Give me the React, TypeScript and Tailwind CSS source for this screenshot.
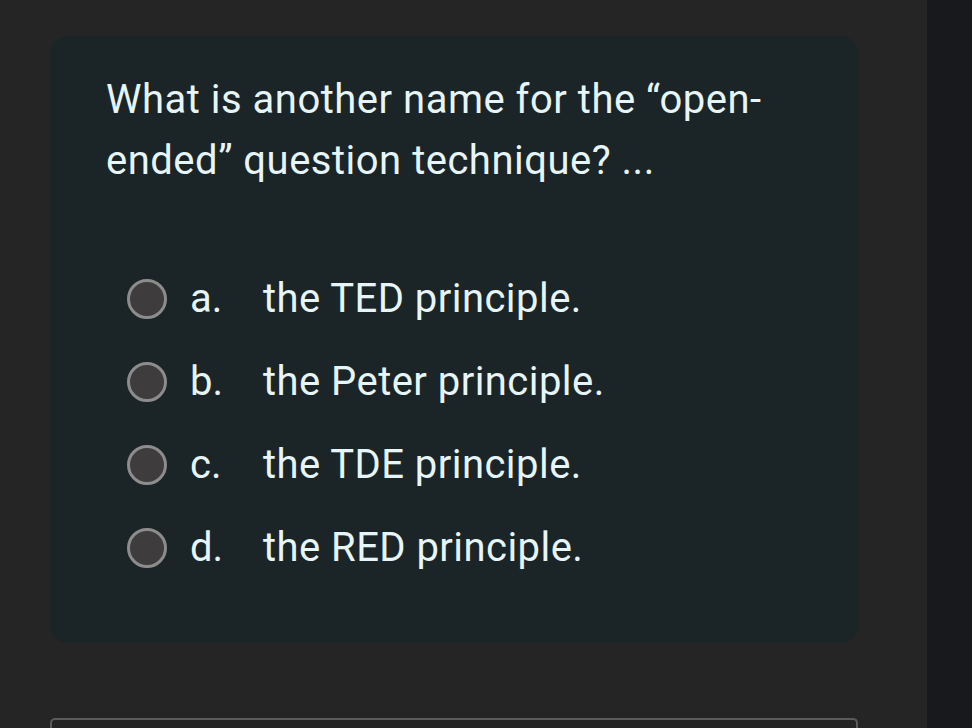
const options = [
  { letter: "a.", text: "the TED principle." },
  { letter: "b.", text: "the Peter principle." },
  { letter: "c.", text: "the TDE principle." },
  { letter: "d.", text: "the RED principle." },
];

export default function App() {
  return (
    <div
      className="flex h-[728px] w-[972px] overflow-hidden bg-[#252525] text-[#e6f5f8]"
      style={{ fontFamily: "Roboto, 'Noto Sans', sans-serif" }}
    >
      <main className="flex w-[927px] flex-col pl-[50px] pr-[69px] pt-[36px]">
        <section className="h-[607px] shrink-0 rounded-[18px] bg-[#1b2427] px-[56px] pt-[33px]">
          <p className="text-[40px] leading-[61px] tracking-[0.5px]">
            What is another name for the “open-ended” question technique? ...
          </p>

          <ul className="mt-[66px] pl-[21px]">
            {options.map((o) => (
              <li key={o.letter} className="flex h-[83px] items-center">
                <span className="h-[40px] w-[40px] shrink-0 rounded-full border-[3px] border-[#8c8c8c] bg-[#3e3c3c]" />
                <span className="ml-[23px] w-[73px] text-[40px] leading-none">{o.letter}</span>
                <span className="text-[40px] leading-none tracking-[0.45px]">{o.text}</span>
              </li>
            ))}
          </ul>
        </section>

        <div className="mt-[75px] h-[40px] shrink-0 rounded-t-[5px] border-x-2 border-t-2 border-[#5b5b5b] bg-[#242424]" />
      </main>
      <aside className="w-[45px] bg-[#18191c]" />
    </div>
  );
}
